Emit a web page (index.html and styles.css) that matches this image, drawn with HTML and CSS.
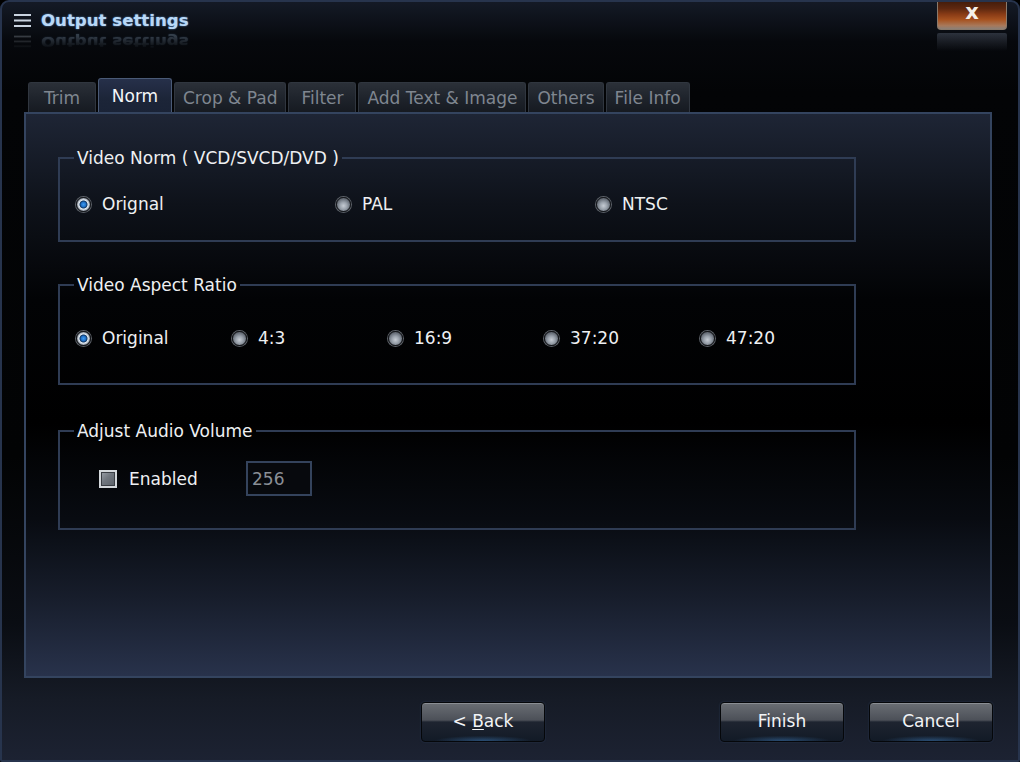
FILE: index.html
```html
<!DOCTYPE html>
<html>
<head>
<meta charset="utf-8">
<title>Output settings</title>
<link rel="stylesheet" href="styles.css">
</head>
<body>
<div class="window">
  <header class="titlebar">
    <div class="title-group">
      <div class="title-row">
        <svg class="menu-icon" width="17" height="15" viewBox="0 0 17 15"><rect x="0" y="1" width="17" height="2" fill="#c9d3df"/><rect x="0" y="6.5" width="17" height="2" fill="#c9d3df"/><rect x="0" y="12" width="17" height="2" fill="#c9d3df"/></svg>
        <h1 class="title">Output settings</h1>
      </div>
      <div class="title-row reflection" aria-hidden="true">
        <svg class="menu-icon" width="17" height="15" viewBox="0 0 17 15"><rect x="0" y="1" width="17" height="2" fill="#c9d3df"/><rect x="0" y="6.5" width="17" height="2" fill="#c9d3df"/><rect x="0" y="12" width="17" height="2" fill="#c9d3df"/></svg>
        <span class="title">Output settings</span>
      </div>
    </div>
    <div class="close-group">
      <button class="close-btn" aria-label="Close"><span>x</span></button>
      <div class="close-reflect" aria-hidden="true"></div>
    </div>
  </header>

  <nav class="tabs">
    <span class="tab">Trim</span>
    <span class="tab active">Norm</span>
    <span class="tab">Crop &amp; Pad</span>
    <span class="tab">Filter</span>
    <span class="tab">Add Text &amp; Image</span>
    <span class="tab">Others</span>
    <span class="tab">File Info</span>
  </nav>

  <main class="panel">
    <fieldset class="group group-norm">
      <legend>Video Norm ( VCD/SVCD/DVD )</legend>
      <div class="options cols-3">
        <label class="opt"><span class="radio checked"></span>Orignal</label>
        <label class="opt"><span class="radio"></span>PAL</label>
        <label class="opt"><span class="radio"></span>NTSC</label>
      </div>
    </fieldset>

    <fieldset class="group group-aspect">
      <legend>Video Aspect Ratio</legend>
      <div class="options cols-5">
        <label class="opt"><span class="radio checked"></span>Original</label>
        <label class="opt"><span class="radio"></span>4:3</label>
        <label class="opt"><span class="radio"></span>16:9</label>
        <label class="opt"><span class="radio"></span>37:20</label>
        <label class="opt"><span class="radio"></span>47:20</label>
      </div>
    </fieldset>

    <fieldset class="group group-audio">
      <legend>Adjust Audio Volume</legend>
      <div class="audio-row">
        <label class="opt check-opt"><span class="checkbox"></span>Enabled</label>
        <span class="volume-input">256</span>
      </div>
    </fieldset>
  </main>

  <footer class="footer">
    <button class="btn back">&lt; <u>B</u>ack</button>
    <button class="btn">Finish</button>
    <button class="btn">Cancel</button>
  </footer>
</div>
</body>
</html>
```

FILE: styles.css
```css
* { box-sizing: border-box; }
html, body { margin: 0; padding: 0; background: #000; }
body {
  font-family: "DejaVu Sans", "Liberation Sans", sans-serif;
  font-size: 17px;
  color: #e9ecef;
}
.window {
  width: 1020px;
  height: 762px;
  border: 2px solid #27344d;
  border-radius: 9px 9px 2px 2px;
  background: linear-gradient(to bottom, #141a26 0, #06080c 40px, #030406 90px, #020304 60%, #0a0d13 82%, #161b26 92%, #1c2232 100%);
  display: flex;
  flex-direction: column;
  overflow: hidden;
}
.titlebar {
  height: 78px;
  display: flex;
  justify-content: space-between;
  align-items: flex-start;
}
.title-group { padding: 8px 0 0 12px; }
.title-row {
  display: flex;
  align-items: center;
  gap: 10px;
  height: 21px;
}
.menu-icon { flex: none; }
.title {
  margin: 0;
  font-family: "DejaVu Sans", sans-serif;
  font-weight: bold;
  font-size: 16.6px;
  color: #b9d8f6;
  text-shadow: 0 0 2px #5a86b6, 0 0 1px #24446a;
}
.reflection {
  transform: scaleY(-0.9);
  opacity: 0.25;
  margin-top: 0;
  -webkit-mask-image: linear-gradient(to top, #000 20%, transparent 90%);
  mask-image: linear-gradient(to top, #000 20%, transparent 90%);
}
.close-group {
  margin-right: 11px;
  margin-top: -2px;
  display: flex;
  flex-direction: column;
  align-items: center;
}
.close-btn {
  width: 70px;
  height: 30px;
  border: 1px solid #8a7a6c;
  border-top: none;
  border-radius: 0 0 4px 4px;
  background: linear-gradient(to bottom, #3e1a0a 0, #5e2810 30%, #8a3c16 50%, #a65220 68%, #a8785a 88%, #8a8078 100%);
  color: #f4f0ea;
  font-family: "DejaVu Sans", sans-serif;
  font-weight: bold;
  font-size: 21px;
  line-height: 22px;
  padding: 0 0 5px;
  display: flex;
  align-items: center;
  justify-content: center;
  box-shadow: inset 0 1px 0 #2a1006;
}
.close-reflect {
  width: 70px;
  height: 18px;
  margin-top: 3px;
  background: linear-gradient(to bottom, rgba(110,120,140,0.35), transparent);
  border-radius: 2px;
}
.tabs {
  display: flex;
  align-items: flex-end;
  gap: 2px;
  padding-left: 26px;
  height: 32px;
}
.tab {
  height: 30px;
  min-width: 68px;
  padding: 0 8px;
  display: flex;
  align-items: center;
  justify-content: center;
  border: 1px solid #30363f;
  border-bottom: none;
  border-radius: 3px 3px 0 0;
  background: linear-gradient(to bottom, #2b3038 0, #1f242c 50%, #161a21 100%);
  color: #7f8690;
  white-space: nowrap;
}
.tab.active {
  height: 34px;
  min-width: 74px;
  border-color: #4a5a76;
  background: linear-gradient(to bottom, #26304a 0, #1c2538 60%, #1a2336 100%);
  color: #f4f6f8;
}
.panel {
  margin-left: 22px;
  width: 968px;
  height: 566px;
  border: 2px solid #34445f;
  background: linear-gradient(to bottom, #1e2535 0, #0e121a 16%, #020305 33%, #000 55%, #080b11 72%, #171d2b 86%, #28324b 100%);
  padding: 34px 0 0 32px;
  display: flex;
  flex-direction: column;
}
.group {
  width: 798px;
  margin: 0;
  padding: 0 0 0 16px;
  border: 2px solid #2f3c54;
  min-inline-size: 0;
}
.group legend {
  margin-left: -2px;
  padding: 0 3px;
  line-height: 20px;
  color: #eef0f2;
}
.group-norm { height: 94px; }
.group-aspect { height: 110px; margin-top: 33px; }
.group-audio { height: 109px; margin-top: 36px; }
.options {
  display: grid;
  align-items: center;
}
.group-norm .options { margin-top: 26px; grid-template-columns: repeat(3, 260px); }
.group-aspect .options { margin-top: 33px; grid-template-columns: repeat(5, 156px); }
.opt {
  display: flex;
  align-items: center;
  gap: 11px;
  color: #eef0f2;
  line-height: 20px;
}
.radio {
  width: 15px;
  height: 15px;
  border-radius: 50%;
  flex: none;
  border: 1px solid #1a1c20;
  background: radial-gradient(circle at 50% 60%, #c6ccd4 0, #9aa2ac 35%, #6a717b 65%, #3c4148 100%);
  box-shadow: 0 0 0 1px #5c6168;
}
.radio.checked {
  background: radial-gradient(circle at 50% 50%, #3e9cf0 0, #1e6cc4 2.5px, #0c3460 3.5px, #e8eef4 4.5px, #b8c0ca 5.5px, #6a717b 7px);
}
.audio-row {
  display: flex;
  align-items: center;
  margin-top: 20px;
  padding-left: 23px;
}
.check-opt { gap: 12px; width: 147px; }
.checkbox {
  width: 18px;
  height: 18px;
  flex: none;
  border: 2px solid #d4d8dc;
  background: linear-gradient(135deg, #9aa0a8 0, #70767e 45%, #5a6068 100%);
  box-shadow: inset 0 0 0 1px #3a3e44;
}
.volume-input {
  width: 66px;
  height: 35px;
  border: 2px solid #34435c;
  background: #07090d;
  color: #8a8f96;
  padding: 6px 0 0 4px;
  line-height: 20px;
}
.footer {
  display: flex;
  justify-content: flex-end;
  gap: 25px;
  padding: 24px 25px 0 0;
}
.btn {
  width: 124px;
  height: 40px;
  border: 1px solid #05070a;
  border-radius: 4px;
  font-family: inherit;
  font-size: 17px;
  color: #f2f4f6;
  background:
    radial-gradient(ellipse 40% 14% at 50% 100%, rgba(70,140,210,0.45), transparent),
    linear-gradient(to bottom, #6a6e74 0, #4c5058 45%, #1e2430 50%, #121a26 100%);
  box-shadow: inset 0 1px 0 #8a8e94, 0 0 2px #2a3a55;
  padding: 0 0 2px;
}
.btn u { text-underline-offset: 2px; }
.back { margin-right: 150px; }
```
